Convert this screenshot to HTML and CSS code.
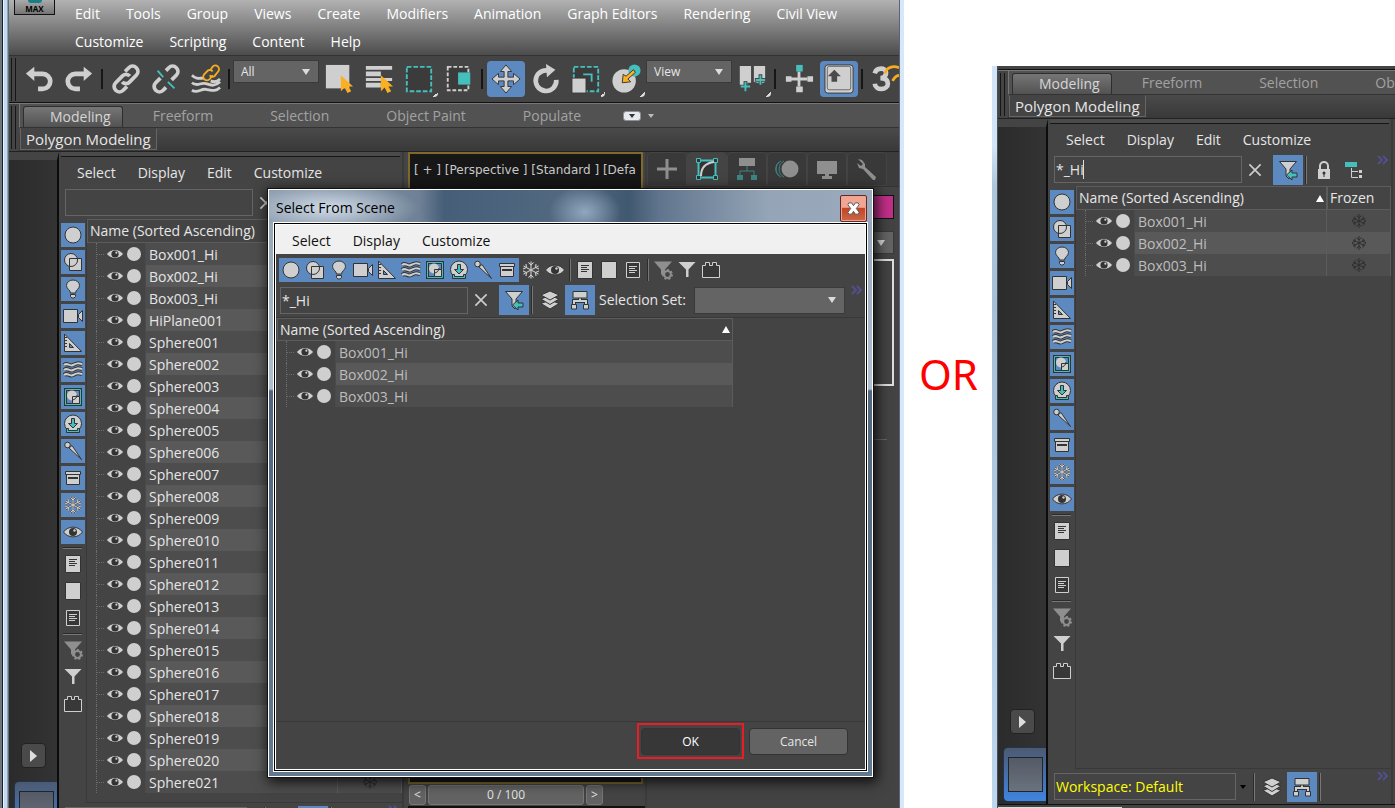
FILE: index.html
```html
<!DOCTYPE html>
<html lang="en">

<head>
    <meta charset="UTF-8">
    <meta name="viewport" content="width=device-width, initial-scale=1.0">
    <title>Select From Scene</title>
    <link rel="stylesheet" href="styles.css">
</head>

<body>
    <svg class="sprite" aria-hidden="true">
        <symbol id="geometry" viewBox="0 0 20 20"><circle cx="10" cy="10" r="8" class="fs" /></symbol>
        <symbol id="shapes" viewBox="0 0 20 20"><circle cx="8" cy="8" r="6.5" class="fs" /><path d="M6.500 6.500h12v12h-12z" class="fs" /><path d="M14.500 7A6.500 6.500 0 0 1 7 14.400" class="ln" /></symbol>
        <symbol id="light" viewBox="0 0 20 20"><path d="M7.500 14C7.500 11 3.500 10 3.500 6.500a6.500 5.500 0 0 1 13 0C16.500 10 12.500 11 12.500 14z" class="fs" /><path d="M7.500 15.500h5v2l-1.500 1.500H9l-1.500-1.500z" class="fs" /></symbol>
        <symbol id="camera" viewBox="0 0 20 20"><path d="M.5 3.500h14v13H.5z" class="fs" /><path d="M15.500 8.500l4-4v11l-4-4z" class="fs" /></symbol>
        <symbol id="helper" viewBox="0 0 20 20"><path d="M1.500 1L18.500 18.500h-17z" class="fs" /><path d="M6.500 10.500v4h4z" class="blue" /><path d="M2 4.500h2M2 7.500h2M2 10.500h2M2 13.500h2" class="ln" /></symbol>
        <symbol id="warp" viewBox="0 0 20 20"><g class="wave-bg"><path d="M1 5c4-3 5 2 9 0s5-2 9-1M1 10c4-3 5 2 9 0s5-2 9-1M1 15c4-3 5 2 9 0s5-2 9-1" /></g><g class="wave"><path d="M1 5c4-3 5 2 9 0s5-2 9-1M1 10c4-3 5 2 9 0s5-2 9-1M1 15c4-3 5 2 9 0s5-2 9-1" /></g></symbol>
        <symbol id="group" viewBox="0 0 20 20"><path d="M1 1h18v18H1z" class="dark" /><path d="M2.500 2.500h15v15h-15z" class="tealbox" /><path d="M3.500 3.500h13v13h-13z" class="blue" /><circle cx="9" cy="8.500" r="5" class="lt" /><path d="M9.500 9.500h7v7h-7z" class="fs" /><path d="M14 8a5 5 0 0 1-5 5" class="ln" /></symbol>
        <symbol id="xref" viewBox="0 0 20 20"><circle cx="10" cy="9.500" r="8.500" class="fs" /><path d="M8.500 4.500h3v5h3L10 14 5.500 9.500h3z" class="teal" /><path d="M3.500 14.500v4h13v-4h-2v2h-9v-2z" class="teal" /></symbol>
        <symbol id="bone" viewBox="0 0 20 20"><path d="M6 7l3-2.500L18.500 18.500z" class="fs" /><circle cx="4.500" cy="4" r="2.800" class="fs" /></symbol>
        <symbol id="container" viewBox="0 0 20 20"><path d="M3.500 6.500h13v10h-13z" class="fs" /><path d="M2.500 3.500h15v3h-15z" class="fs" /><path d="M5 10h10" class="ln thick" /></symbol>
        <symbol id="frozen" viewBox="0 0 20 20"><g class="flake-bg"><path d="M10 1.500v17M2.500 6l15 8M17.500 6l-15 8M7.500 2.500L10 5l2.500-2.500M7.500 17.500L10 15l2.500 2.500M2 9l3.500-1.500L5 4M18 9l-3.500-1.500L15 4M2 11l3.500 1.500L5 16M18 11l-3.500 1.500L15 16" /></g><g class="flake"><path d="M10 1.500v17M2.500 6l15 8M17.500 6l-15 8M7.500 2.500L10 5l2.500-2.500M7.500 17.500L10 15l2.500 2.500M2 9l3.500-1.500L5 4M18 9l-3.500-1.500L15 4M2 11l3.500 1.500L5 16M18 11l-3.500 1.500L15 16" /></g></symbol>
        <symbol id="flake" viewBox="0 0 20 20"><path d="M10 3v14M4 7l12 6M16 7L4 13M7.500 4.500L10 7l2.500-2.500M7.500 15.500L10 13l2.500 2.500M3 9.500l3-1v-3M17 9.500l-3-1v-3M3 10.500l3 1v3M17 10.500l-3 1v3" class="flake-dark" /></symbol>
        <symbol id="eye" viewBox="0 0 20 20"><path d="M.5 10C5 3.500 15 3.500 19.500 10 15 16.500 5 16.500.5 10z" class="fs" /><circle cx="10" cy="10" r="4" class="dark" /><circle cx="11.500" cy="8.500" r="1.200" class="lt" /></symbol>
        <symbol id="all" viewBox="0 0 20 20"><path d="M2.500 1.500h15v17h-15z" class="fs" /><path d="M6 5.500h8M6 7.500h6M6 9.500h8M6 11.500h6" class="ln" /></symbol>
        <symbol id="none" viewBox="0 0 20 20"><path d="M2.500 1.500h15v17h-15z" class="fs" /></symbol>
        <symbol id="invert" viewBox="0 0 20 20"><path d="M3.500 2.500h13v15h-13z" class="inv" /><path d="M6 6.500h8M6 8.500h6M6 10.500h8M6 12.500h6" class="lt-line" /></symbol>
        <symbol id="filterset" viewBox="0 0 20 20"><path d="M1 1.500h18l-7 8V17l-4-3V9.500z" class="dim" /><circle cx="14.500" cy="14.500" r="3.400" class="gear" /><circle cx="14.500" cy="14.500" r="4.500" class="teeth" /></symbol>
        <symbol id="funnel" viewBox="0 0 20 20"><path d="M1.500 2h17l-7 7.500V17H9V9.500z" class="lt" /></symbol>
        <symbol id="brick" viewBox="0 0 20 20"><path d="M1.500 5.500h3v-3h4v3h3v-3h4v3h3v12h-17z" class="inv" /></symbol>
        <symbol id="filterback" viewBox="0 0 20 20"><path d="M1.500 1.500h17l-6.500 7.500v4l-1 6-3-3V9z" class="fs" /><path d="M19 13h-5v-3l-5.500 5 5.500 5v-3h5z" class="teal" /></symbol>
        <symbol id="layers" viewBox="0 0 20 20"><path d="M10 10l9 3.500L10 19l-9-5.500z" class="fs" /><path d="M10 5.500l9 3.500-9 5.500L1 9z" class="fs" /><path d="M10 1l9 4-9 5-9-5z" class="fs" /></symbol>
        <symbol id="hierarchy" viewBox="0 0 20 20"><path d="M10 7v4M4 15v-4h12v4" class="hier-bg" /><path d="M10 7v4M4 15v-4h12v4" class="hier" /><path d="M3 1.500h14V8H3zM1.500 14.500h5v4.500h-5zM13.500 14.500h5v4.500h-5z" class="fs" /></symbol>
        <symbol id="lock" viewBox="0 0 20 20"><path d="M6 10V6a4 4 0 0 1 8 0v4" class="lt-line thick" /><path d="M4 9h12v10H4z" class="lt" /><circle cx="10" cy="13" r="1.500" class="dark" /><path d="M9.500 13h1v4h-1z" class="dark" /></symbol>
        <symbol id="tree" viewBox="0 0 20 20"><path d="M1 2h12v5H1z" class="teal-flat" /><path d="M7.500 8v9.500H14M7.500 11.500H14" class="lt-line" /><path d="M15 10h3v3h-3zM15 15h3v3h-3z" class="lt" /></symbol>
        <symbol id="clear" viewBox="0 0 20 20"><path d="M3 3l14 14M17 3L3 17" class="lt-line thick" /></symbol>
        <symbol id="more" viewBox="0 0 12 10"><path d="M1 1l4 4-4 4M6 1l4 4-4 4" class="chevron" /></symbol>

        <symbol id="undo" viewBox="0 0 32 32"><path d="M2 10l9-7v5h9a9 9 0 0 1 0 21h-5v-5h5a5 5 0 0 0 0-11h-9v5z" class="lt" /></symbol>
        <symbol id="redo" viewBox="0 0 32 32"><path d="M30 10l-9-7v5h-9a9 9 0 0 0 0 21h5v-5h-5a5 5 0 0 1 0-11h9v5z" class="lt" /></symbol>
        <symbol id="link" viewBox="0 0 32 32"><g class="chain"><path d="M15 8l4-4a5 5 0 0 1 8 8l-7 7a5 5 0 0 1-8 0" /><path d="M17 24l-4 4a5 5 0 0 1-8-8l7-7a5 5 0 0 1 8 0" /></g></symbol>
        <symbol id="unlink" viewBox="0 0 32 32"><g class="chain"><path d="M16 7l3-3a5 5 0 0 1 8 8l-5 5" /><path d="M16 25l-3 3a5 5 0 0 1-8-8l5-5" /></g><path d="M7 7l6 7M18 19l7 7" class="teal-line" /></symbol>
        <symbol id="bind" viewBox="0 0 32 32"><path d="M1 12c5 5 8 3 13 3M21 18c4 2 7 1 10-2M1 20c6 5 9-1 15 1s10 3 15-2M1 28c6 4 9-2 15-1s10 3 15-2" class="bigwave" /><g class="gold-chain"><path d="M21 6l2-3a3.500 3.500 0 0 1 6 5l-4 5a3.500 3.500 0 0 1-5-1" /><path d="M23 12l-3 4a3.500 3.500 0 0 1-6-5l4-4a3.500 3.500 0 0 1 5 1" /></g></symbol>
        <symbol id="selobj" viewBox="0 0 32 32"><path d="M2 1h25v25H2z" class="lt" /><path d="M18 12v17l4-4 3 6 4-2-3-5h5z" class="gold" /></symbol>
        <symbol id="byname" viewBox="0 0 32 32"><path d="M2 2h28v4H2zM2 8h16v5H2zM2 15h28v3H2zM2 20h16v5H2z" class="lt" /><path d="M18 12v17l4-4 3 6 4-2-3-5h5z" class="gold" /></symbol>
        <symbol id="region" viewBox="0 0 32 32"><path d="M3 3h26v26H3z" class="teal-dash" /></symbol>
        <symbol id="crossing" viewBox="0 0 32 32"><path d="M4 3h22v25H4z" class="lt-dash" /><path d="M15 9h13v13H15z" class="teal-flat" /></symbol>
        <symbol id="move" viewBox="0 0 32 32"><path d="M16 1l6 7h-4v6h6v-4l7 6-7 6v-4h-6v6h4l-6 7-6-7h4v-6H8v4l-7-6 7-6v4h6V8h-4z" class="fs" /></symbol>
        <symbol id="rotate" viewBox="0 0 32 32"><path d="M21 8A11 11 0 1 0 27 17" class="rot" /><path d="M16 0l10 6-9 8z" class="lt" /></symbol>
        <symbol id="scale" viewBox="0 0 32 32"><path d="M3 3h26v26H3z" class="teal-dash" /><path d="M1 15h15v16H1z" class="fs" /><path d="M13 11h9v8" class="teal-line thick" /></symbol>
        <symbol id="place" viewBox="0 0 32 32"><circle cx="14" cy="18" r="12.500" class="lt" /><circle cx="25" cy="7" r="6.500" class="teal-flat" /><path d="M24 6l2 3-8 7 3 3-9 1 1-9 3 2z" class="gold outline" /></symbol>
        <symbol id="pivot" viewBox="0 0 32 32"><path d="M3 2h12v18H11v6L3 22zM18 2h12v17l-4 2-8-2z" class="lt" /><path d="M9 18v12M3 24h12M25 11v12M19 17h12" class="dark-line" /><path d="M9 19v10M4 24h10M25 12v10M20 17h10" class="teal-line" /></symbol>
        <symbol id="manip" viewBox="0 0 32 32"><path d="M16 8v16M7 16h18" class="bar" /><path d="M13 1h7v7h-7z" class="teal-flat" /><path d="M13 24h7v6h-7zM2 13h6v6H2zM25 13h6v6h-6z" class="lt" /></symbol>
        <symbol id="keyboard" viewBox="0 0 32 32"><rect x="1" y="1" width="30" height="30" rx="3" class="fs" /><rect x="3.500" y="2.500" width="25" height="25" rx="2" class="keytop" /><path d="M11 6l7 7h-4v6H8v-6H4z" class="darker" /></symbol>
        <symbol id="magnet" viewBox="0 0 32 32"><path d="M4 10c2-7 12-6 12-1 0 5-4 6-6 6 4 0 8 1 8 6 0 7-13 8-14 0" class="rot" /><path d="M15 10c2-8 10-8 15-6M23 18c2-4 4-6 8-6" class="gold-line" /></symbol>

        <symbol id="create" viewBox="0 0 24 24"><path d="M10.500 2h3v8.500H22v3h-8.500V22h-3v-8.500H2v-3h8.500z" class="grey" /></symbol>
        <symbol id="modify" viewBox="0 0 24 24"><path d="M3.500 3.500h17v17h-17z" class="teal-frame" /><path d="M1.500 1.500h4v4h-4zM18.500 1.500h4v4h-4zM1.500 18.500h4v4h-4zM18.500 18.500h4v4h-4z" class="handle" /><path d="M6 19c0-9 5-13 13-14" class="lt-line thick" /></symbol>
        <symbol id="hier" viewBox="0 0 24 24"><path d="M4 1h16v8H4z" class="grey" /><path d="M12 9v5M5 18v-4h14v4" class="teal-thin" /><path d="M2 18h6v5H2zM16 18h6v5h-6z" class="teal-dim" /></symbol>
        <symbol id="motion" viewBox="0 0 24 24"><circle cx="15" cy="12" r="8.500" class="grey" /><path d="M9 4a9 9 0 0 0 0 16M6 4a9 9 0 0 0 0 16M4 5a9 9 0 0 0 0 14" class="teal-thin" /></symbol>
        <symbol id="display" viewBox="0 0 24 24"><path d="M2 4h20v13H2zM10 17h4v2h3v3H7v-3h3z" class="grey" /></symbol>
        <symbol id="utility" viewBox="0 0 24 24"><path d="M3 2l4 1 3 4v3l11 10-1 3h-2L8 12l-4-1-2-5 4 3 2-2z" class="grey" /></symbol>
    </svg>

    <main class="desktop">
        <section class="app app-full">
            <div class="frame frame-left"></div>
            <div class="app-body">
                <header class="menubar">
                    <div class="app-logo"><span class="logo-dot"></span>MAX</div>
                    <nav class="menus">
                        <a href="#">Edit</a><a href="#">Tools</a><a href="#">Group</a><a href="#">Views</a>
                        <a href="#">Create</a><a href="#">Modifiers</a><a href="#">Animation</a>
                        <a href="#">Graph Editors</a><a href="#">Rendering</a><a href="#">Civil View</a>
                        <a href="#">Customize</a><a href="#">Scripting</a><a href="#">Content</a><a href="#">Help</a>
                    </nav>
                </header>

                <div class="toolbar">
                    <i class="grip"></i>
                    <button aria-label="Undo"><svg><use href="#undo" /></svg></button>
                    <button aria-label="Redo"><svg><use href="#redo" /></svg></button>
                    <i class="sep"></i>
                    <button aria-label="Link"><svg><use href="#link" /></svg></button>
                    <button aria-label="Unlink"><svg><use href="#unlink" /></svg></button>
                    <button aria-label="Bind to Space Warp"><svg><use href="#bind" /></svg></button>
                    <i class="sep"></i>
                    <select aria-label="Selection Filter"><option>All</option></select>
                    <button aria-label="Select Object"><svg><use href="#selobj" /></svg></button>
                    <button aria-label="Select by Name"><svg><use href="#byname" /></svg></button>
                    <button class="fly" aria-label="Selection Region"><svg><use href="#region" /></svg></button>
                    <button aria-label="Window / Crossing"><svg><use href="#crossing" /></svg></button>
                    <i class="sep"></i>
                    <button class="on" aria-label="Move"><svg><use href="#move" /></svg></button>
                    <button aria-label="Rotate"><svg><use href="#rotate" /></svg></button>
                    <button class="fly" aria-label="Scale"><svg><use href="#scale" /></svg></button>
                    <button class="fly" aria-label="Place"><svg><use href="#place" /></svg></button>
                    <select aria-label="Coordinate System"><option>View</option></select>
                    <button class="fly" aria-label="Pivot Center"><svg><use href="#pivot" /></svg></button>
                    <i class="sep"></i>
                    <button aria-label="Manipulate"><svg><use href="#manip" /></svg></button>
                    <button class="on" aria-label="Keyboard Override"><svg><use href="#keyboard" /></svg></button>
                    <i class="sep"></i>
                    <button aria-label="Snaps Toggle"><svg><use href="#magnet" /></svg></button>
                </div>

                <div class="ribbon">
                    <i class="grip"></i>
                    <div class="ribbon-main">
                        <nav class="tabs">
                            <a class="active" href="#">Modeling</a><a href="#">Freeform</a><a href="#">Selection</a>
                            <a href="#">Object Paint</a><a href="#">Populate</a>
                            <button class="pill" aria-label="Minimize ribbon"></button><i class="caret"></i>
                        </nav>
                        <div class="ribbon-panel"><a href="#">Polygon Modeling</a></div>
                    </div>
                </div>

                <div class="work">
                    <div class="side">
                        <button class="play" aria-label="Expand"></button>
                        <div class="layout-tab"><span></span></div>
                    </div>
                    <div class="explorer" id="explorer-main"></div>
                    <div class="center">
                        <div class="viewport">[ + ] [Perspective ] [Standard ] [Defa</div>
                        <div class="time">
                            <button>&lt;</button><button class="slider">0 / 100</button><button>&gt;</button>
                        </div>
                        <div class="ticks"></div>
                    </div>
                    <div class="command">
                        <div class="cmd-tabs">
                            <button aria-label="Create"><svg><use href="#create" /></svg></button>
                            <button class="on" aria-label="Modify"><svg><use href="#modify" /></svg></button>
                            <button aria-label="Hierarchy"><svg><use href="#hier" /></svg></button>
                            <button aria-label="Motion"><svg><use href="#motion" /></svg></button>
                            <button aria-label="Display"><svg><use href="#display" /></svg></button>
                            <button aria-label="Utilities"><svg><use href="#utility" /></svg></button>
                        </div>
                        <div class="cmd-body">
                            <div class="swatch"></div>
                            <select aria-label="Modifier List"><option></option></select>
                            <div class="stack"></div>
                            <hr>
                        </div>
                    </div>
                </div>
            </div>
            <div class="frame frame-right"></div>

            <div class="dialog" role="dialog" aria-labelledby="dialog-title">
                <div class="titlebar">
                    <h1 id="dialog-title">Select From Scene</h1>
                    <button class="close" aria-label="Close"><svg viewBox="0 0 16 16"><path d="M3 2h3l2 3 2-3h3l1 2-3 4 3 4-1 2h-3l-2-3-2 3H3l-1-2 3-4-3-4z" /></svg></button>
                </div>
                <div class="dialog-body">
                    <nav class="dialog-menu"><a href="#">Select</a><a href="#">Display</a><a href="#">Customize</a></nav>
                    <div class="filters-h" id="dialog-filters"></div>
                    <div class="find">
                        <input type="text" aria-label="Find" value="*_Hi">
                        <button class="clear" aria-label="Clear"><svg><use href="#clear" /></svg></button>
                        <button class="sq on" aria-label="Filter by find"><svg><use href="#filterback" /></svg></button>
                        <i class="vsep"></i>
                        <button class="sq" aria-label="Sort by Layer"><svg><use href="#layers" /></svg></button>
                        <button class="sq on" aria-label="Sort by Hierarchy"><svg><use href="#hierarchy" /></svg></button>
                        <label for="selset">Selection Set:</label>
                        <select id="selset"><option></option></select>
                        <svg class="more"><use href="#more" /></svg>
                    </div>
                    <div class="results" id="dialog-list"></div>
                    <div class="actions">
                        <div class="marked"><button class="ok">OK</button></div>
                        <button class="cancel">Cancel</button>
                    </div>
                </div>
            </div>
        </section>

        <div class="or"><p>OR</p></div>

        <section class="app app-docked">
            <div class="frame frame-left"></div>
            <div class="app-body">
                <div class="ribbon">
                    <i class="grip"></i>
                    <div class="ribbon-main">
                        <nav class="tabs">
                            <a class="active" href="#">Modeling</a><a href="#">Freeform</a><a href="#">Selection</a>
                            <a href="#">Ob</a>
                        </nav>
                        <div class="ribbon-panel"><a href="#">Polygon Modeling</a></div>
                    </div>
                </div>
                <div class="work">
                    <div class="side">
                        <button class="play" aria-label="Expand"></button>
                        <div class="layout-tab"><span></span></div>
                    </div>
                    <div class="explorer" id="explorer-docked"></div>
                </div>
                <div class="trackbar"><span></span></div>
            </div>
        </section>
    </main>

    <script>
        const filters = ["geometry", "shapes", "light", "camera", "helper", "warp", "group", "xref", "bone", "container", "frozen", "eye"];
        const tools = ["all", "none", "invert", "", "filterset", "funnel", "brick"];
        const boxes = ["Box001_Hi", "Box002_Hi", "Box003_Hi"];
        const scene = boxes.concat("HiPlane001");
        for (let i = 1; i <= 21; i++)
            scene.push("Sphere0" + (i < 10 ? "0" + i : i));

        function icon(name) {
            return `<svg><use href="#${name}" /></svg>`;
        }

        // buttons of the filter bar, the first `on` of them are pressed
        function filterBar(on) {
            let html = "";
            filters.forEach((f, i) => {
                html += `<button class="${i < on ? "on" : ""}" aria-label="${f}">${icon(f)}</button>`;
            });
            html += "<i></i>";
            tools.forEach(t => {
                html += t ? `<button aria-label="${t}">${icon(t)}</button>` : "<i></i>";
            });
            return html;
        }

        function nodeTable(names, frozen) {
            let html = `<table><colgroup><col class="col-tree"><col>${frozen ? `<col class="col-frozen">` : ""}</colgroup>`;
            html += `<thead><tr><th class="name" colspan="2">Name (Sorted Ascending)</th>`;
            html += frozen ? `<th class="frozen">Frozen</th>` : "";
            html += "</tr></thead><tbody>";
            names.forEach(n => {
                html += `<tr><td class="tree"><div><i></i>${icon("eye")}<b></b></div></td><td class="node">${n}</td>`;
                html += frozen ? `<td class="frozen">${icon("flake")}</td>` : "";
                html += "</tr>";
            });
            return html + "</tbody></table>";
        }

        function explorer(id, names, find) {
            document.getElementById(id).innerHTML = `
                <div class="handle-bar"></div>
                <nav class="exp-menu"><a href="#">Select</a><a href="#">Display</a><a href="#">Edit</a><a href="#">Customize</a></nav>
                <div class="find">
                    <input type="text" aria-label="Find" value="${find}">
                    <button class="clear" aria-label="Clear">${icon("clear")}</button>
                    <button class="sq on" aria-label="Filter by find">${icon("filterback")}</button>
                    <i class="vsep"></i>
                    <button class="sq" aria-label="Lock">${icon("lock")}</button>
                    <button class="sq" aria-label="Hierarchy">${icon("tree")}</button>
                    <svg class="more"><use href="#more" /></svg>
                </div>
                <div class="exp-body">
                    <div class="filters-v">${filterBar(12)}</div>
                    <div class="list">${nodeTable(names, true)}</div>
                </div>
                <div class="workspace">
                    <input type="text" aria-label="Workspace" value="Workspace: Default">
                    <i class="caret"></i><i class="vsep"></i>
                    <button class="sq" aria-label="Sort by Layer">${icon("layers")}</button>
                    <button class="sq on" aria-label="Sort by Hierarchy">${icon("hierarchy")}</button>
                    <i class="vsep"></i>
                    <svg class="more"><use href="#more" /></svg>
                </div>`;
        }

        explorer("explorer-main", scene, "");
        explorer("explorer-docked", boxes, "*_Hi");
        document.getElementById("dialog-filters").innerHTML = filterBar(10);
        document.getElementById("dialog-list").innerHTML = nodeTable(boxes, false);
    </script>
</body>

</html>
```
FILE: styles.css
```css
* {
    box-sizing: border-box;
}

body {
    margin: 0;
    font-family: "Open Sans", "Noto Sans", sans-serif;
    font-size: 14px;
    line-height: 20px;
    color: #e6e6e6;
    background: #fff;
    overflow: hidden;
}

a {
    color: inherit;
    text-decoration: none;
}

button,
input,
select {
    font: inherit;
    color: inherit;
    margin: 0;
    padding: 0;
    border: none;
    background: none;
    border-radius: 0;
}

svg {
    display: block;
    flex: none;
}

.sprite {
    position: absolute;
    width: 0;
    height: 0;
}

/* icon parts */
.fs { fill: #cfcfcf; stroke: #333; }
.lt { fill: #cfcfcf; }
.dark { fill: #333; }
.darker { fill: #4a4a4a; }
.blue { fill: #5d89c1; stroke: #333; }
.ln { fill: none; stroke: #333; }
.lt-line { fill: none; stroke: #cfcfcf; }
.inv { fill: #383838; stroke: #cfcfcf; }
.thick { stroke-width: 2; }
.wave, .wave-bg, .flake, .flake-bg { fill: none; stroke: #cfcfcf; stroke-width: 2; }
.wave-bg { stroke: #333; stroke-width: 4; }
.flake { stroke-width: 1; }
.flake-bg { stroke: #555; stroke-width: 2; }
.flake-dark { fill: none; stroke: #2f2f2f; }
.teal { fill: #45bfbc; stroke: #333; }
.teal-flat { fill: #45bfbc; }
.teal-dim { fill: #3d8583; }
.tealbox { fill: none; stroke: #45bfbc; }
.teal-line { fill: none; stroke: #45bfbc; stroke-width: 2; }
.teal-thin { fill: none; stroke: #3d8583; }
.teal-frame { fill: #333; stroke: #45bfbc; stroke-width: 2; }
.handle { fill: #333; stroke: #45bfbc; }
.teal-dash { fill: #3b3b3b; stroke: #45bfbc; stroke-width: 2; stroke-dasharray: 5 2; }
.lt-dash { fill: #3b3b3b; stroke: #cfcfcf; stroke-width: 2; stroke-dasharray: 4 2; }
.dim { fill: #8f8f8f; }
.gear { fill: #444; stroke: #8f8f8f; stroke-width: 2; }
.teeth { fill: none; stroke: #8f8f8f; stroke-width: 2; stroke-dasharray: 2 2; }
.grey { fill: #8f8f8f; }
.chain { fill: none; stroke: #cfcfcf; stroke-width: 4; }
.gold-chain { fill: none; stroke: #f5ad1e; stroke-width: 2; }
.gold { fill: #fbb021; }
.outline { stroke: #333; }
.gold-line { fill: none; stroke: #f5ad1e; stroke-width: 3; }
.bigwave { fill: none; stroke: #cfcfcf; stroke-width: 3; }
.dark-line { fill: none; stroke: #444; stroke-width: 4; }
.bar { stroke: #cfcfcf; stroke-width: 3; }
.rot { fill: none; stroke: #cfcfcf; stroke-width: 5; }
.hier-bg { fill: none; stroke: #333; stroke-width: 4; }
.hier { fill: none; stroke: #cfcfcf; stroke-width: 2; }
.keytop { fill: none; stroke: #666; }
.chevron { fill: none; stroke: #50508c; stroke-width: 2; }

.desktop {
    display: grid;
    grid-template-columns: 905fr 87fr 403fr;
    height: 100vh;
}

.app {
    position: relative;
    display: flex;
    min-width: 0;
    overflow: hidden;
}

.app-docked {
    margin-top: 66px;
}

.app-body {
    flex: 1;
    min-width: 0;
    display: flex;
    flex-direction: column;
    background: #444;
    overflow: hidden;
}

.app-docked .app-body {
    padding-top: 4px;
}

.frame {
    flex: none;
    width: 9px;
    background: linear-gradient(90deg, #6f7680 2px, #15202c 2px 3px, #eaf3fc 3px 4px, #c4daf0 4px 7px, #5c6b7c 8px);
}

.frame-right {
    width: 6px;
    background: linear-gradient(90deg, #5c6470 1px, #d5e7f9 1px 5px, #fff 5px);
}

.app-docked .frame {
    width: 6px;
    background: linear-gradient(#d2e5f8, #d2e5f8 80px, #aec6dc 120px, #a6bfd6 240px, #bed7ee);
    border-right: 1px solid #46505c;
}

/* menu bar */
.menubar {
    flex: none;
    display: flex;
    height: 55px;
    background: linear-gradient(#b2b2b2, #4c4c4c);
    color: #fff;
}

.app-logo {
    display: flex;
    flex-direction: column;
    align-items: center;
    justify-content: flex-end;
    width: 41px;
    height: 15px;
    margin-left: 5px;
    border: 1px solid #111;
    border-top: 0;
    background: linear-gradient(#aaa, #747474);
    color: #000;
    font-size: 8px;
    line-height: 11px;
    font-weight: bold;
}

.logo-dot {
    width: 14px;
    height: 3px;
    border-radius: 0 0 8px 8px;
    background: #167f88;
}

.menus {
    flex: 1;
    display: flex;
    flex-wrap: wrap;
    column-gap: 26px;
    margin-left: 20px;
    line-height: 28px;
}

/* main toolbar */
.toolbar {
    flex: none;
    display: flex;
    height: 48px;
    border-top: 1px solid #333;
    overflow: hidden;
}

.grip {
    flex: none;
    width: 5px;
    margin: 2px 3px 2px 2px;
    border: solid #161616;
    border-width: 0 1px;
}

.toolbar button {
    flex: none;
    display: flex;
    align-items: center;
    justify-content: center;
    width: 38px;
    height: 36px;
    margin: 5px 1px;
    border-radius: 4px;
}

.toolbar button svg {
    width: 30px;
    height: 30px;
}

.toolbar .on,
.filters-h .on,
.filters-v .on,
.sq.on {
    background: #5d89c1;
}

.toolbar .fly {
    background: linear-gradient(135deg, transparent 50%, #ddd 50%) right bottom / 5px 5px no-repeat;
}

.sep {
    flex: none;
    width: 2px;
    height: 20px;
    margin: 13px 3px 0 2px;
    background: #161616;
}

.toolbar select,
.find select,
.command select {
    appearance: none;
    background: #646464 url('data:image/svg+xml,<svg xmlns="http://www.w3.org/2000/svg" width="8" height="6"><path d="M0 0h8L4 6z" fill="%23dcdcdc"/></svg>') right 8px center no-repeat;
    border: 1px solid #3a3a3a;
}

.toolbar select {
    flex: none;
    width: 86px;
    height: 23px;
    margin-top: 4px;
    padding-left: 7px;
    font-size: 12px;
}

/* ribbon */
.ribbon {
    flex: none;
    display: flex;
    height: 49px;
    border-top: 1px solid #777;
    border-bottom: 1px solid #222;
    box-shadow: 0 -1px #111;
}

.ribbon-main {
    flex: 1;
    min-width: 0;
    overflow: hidden;
}

.tabs {
    display: flex;
    align-items: center;
    gap: 57px;
    height: 24px;
    padding-left: 3px;
    background: #525252;
    border-left: 1px solid #777;
    border-bottom: 1px solid #333;
    color: #a2a2a2;
    white-space: nowrap;
}

.tabs .active {
    flex: none;
    height: 21px;
    align-self: flex-end;
    margin-right: -27px;
    padding: 0 11px 0 26px;
    border: 1px solid #2e2e2e;
    border-bottom: 0;
    border-radius: 3px 3px 0 0;
    background: linear-gradient(#767676, #525252);
    color: #d6d6d6;
}

.pill {
    width: 18px;
    height: 10px;
    margin: 0 -50px 0 -15px;
    border: 1px solid #8b9097;
    border-radius: 3px;
    background: url('data:image/svg+xml,<svg xmlns="http://www.w3.org/2000/svg" width="6" height="4"><path d="M0 0h6L3 4z" fill="%23333"/></svg>') center no-repeat #e6eaee;
}

.caret {
    flex: none;
    border: 3px solid transparent;
    border-top: 4px solid #bbb;
    border-bottom: 0;
}

.ribbon-panel {
    height: 24px;
    background: linear-gradient(#4a4a4a, #383838);
}

.ribbon-panel a {
    display: inline-block;
    height: 22px;
    margin-left: 1px;
    padding: 0 5px;
    border: 1px solid #656565;
    border-top-color: #444;
    background: #444;
    font-size: 15px;
}

/* work area */
.work {
    flex: 1 0 auto;
    display: flex;
}

.side {
    flex: none;
    display: flex;
    flex-direction: column;
    justify-content: flex-end;
    gap: 13px;
    width: 50px;
    padding: 0 0 2px 5px;
    border-right: 2px solid #0c0c0c;
    background: linear-gradient(90deg, #2b2b2b, #333);
    border-top: 8px solid #444;
}

.play {
    width: 25px;
    height: 25px;
    margin-left: 7px;
    border: 1px solid #222;
    border-radius: 4px;
    background: url('data:image/svg+xml,<svg xmlns="http://www.w3.org/2000/svg" width="7" height="12"><path d="M0 0v12l7-6z" fill="%23ddd"/></svg>') center no-repeat #4a4a4a;
}

.layout-tab {
    height: 55px;
    padding: 9px 3px 10px 4px;
    border: 1px solid #25344a;
    border-right: 0;
    border-radius: 5px 0 0 5px;
    background: linear-gradient(#4c5a72, #3f84e0);
}

.layout-tab span {
    display: block;
    height: 35px;
    border: 1px solid #20252c;
    background: linear-gradient(#545a66, #69727e);
}

.explorer {
    flex: none;
    display: flex;
    flex-direction: column;
    width: 345px;
    border-right: 2px solid #3a3a3a;
}

.handle-bar {
    flex: none;
    height: 8px;
    border-top: 4px solid #4b4b4b;
    box-shadow: inset 0 1px #161616;
    margin: 0 2px;
}

.exp-menu {
    flex: none;
    display: flex;
    gap: 22px;
    height: 26px;
    padding-left: 18px;
    line-height: 26px;
}

.find,
.workspace {
    flex: none;
    display: flex;
    align-items: center;
    height: 33px;
    padding-left: 6px;
}

.find input,
.workspace input {
    flex: none;
    width: 188px;
    height: 27px;
    padding: 0 1px;
    border: 1px solid #656565;
}

/* caret of the focused find box */
#explorer-docked .find input {
    background: linear-gradient(#ddd, #ddd) 28px 3px / 1px 19px no-repeat;
}

.clear,
.sq {
    flex: none;
    display: flex;
    align-items: center;
    justify-content: center;
    width: 30px;
    height: 30px;
}

.clear {
    width: 26px;
    margin-right: 5px;
}

.clear svg {
    width: 16px;
    height: 16px;
}

.sq svg {
    width: 20px;
    height: 20px;
}

.vsep {
    flex: none;
    width: 2px;
    height: 28px;
    margin: 0 2px;
    background: linear-gradient(90deg, #2c2c2c 50%, #777 50%);
}

.more {
    align-self: flex-start;
    width: 12px;
    height: 10px;
    margin: 2px 2px 0 auto;
}

.exp-body {
    flex: 1 0 auto;
    display: flex;
}

.filters-v {
    flex: none;
    width: 27px;
    padding: 4px 0 0 2px;
}

.filters-v button,
.filters-h button {
    display: flex;
    align-items: center;
    justify-content: center;
    width: 24px;
    height: 24px;
}

.filters-v button {
    margin-bottom: 3px;
}

.filters-v svg,
.filters-h svg {
    width: 20px;
    height: 20px;
}

.filters-v i {
    display: block;
    width: 19px;
    height: 2px;
    margin: 2px 2px 3px;
    border-top: 1px solid #2c2c2c;
    border-bottom: 1px solid #777;
}

.list {
    flex: 1;
    padding-bottom: 9px;
    border: solid #393939;
    border-width: 0 0 1px 1px;
}

table {
    width: 100%;
    border-collapse: separate;
    border-spacing: 0;
    table-layout: fixed;
}

.col-tree {
    width: 58px;
}

.col-frozen {
    width: 64px;
}

th {
    height: 24px;
    padding: 0 2px;
    border: 1px solid #5c5c5c;
    font-weight: normal;
    text-align: left;
    white-space: nowrap;
}

th.name {
    background: url('data:image/svg+xml,<svg xmlns="http://www.w3.org/2000/svg" width="8" height="7"><path d="M4 0l4 7H0z" fill="%23fff"/></svg>') right 2px center no-repeat;
}

td {
    height: 22px;
    padding: 0;
    line-height: 20px;
}

.tree div {
    display: flex;
    align-items: center;
    height: 22px;
}

.tree i {
    flex: none;
    width: 8px;
    height: 22px;
    margin: 0 2px 0 9px;
    border-left: 1px dotted #6b6b6b;
    background: linear-gradient(90deg, #6b6b6b 50%, transparent 50%) 0 50% / 2px 1px repeat-x;
}

.tree svg {
    width: 18px;
    height: 18px;
}

.tree b {
    width: 14px;
    height: 14px;
    margin-left: 3px;
    border-radius: 7px;
    background: #cfcfcf;
}

td.node {
    padding: 2px 0 0 3px;
    border-left: 1px solid #4a4a4a;
}

td.node,
td.frozen {
    background: #4d4d4d;
    border-right: 1px solid #5c5c5c;
}

tr:nth-child(even) td.node,
tr:nth-child(even) td.frozen {
    background: #595959;
}

td.frozen svg {
    width: 20px;
    height: 20px;
    margin: 0 auto;
}

#explorer-docked td.node,
.dialog td.node {
    color: #bebebe;
}

.workspace {
    height: 35px;
}

.workspace input {
    width: 182px;
    color: #ff0;
}

.workspace .caret {
    margin: 0 5px 0 4px;
    border-top-color: #000;
}

.trackbar {
    flex: none;
    height: 4px;
    border-top: 1px solid #111;
    padding-top: 2px;
}

.trackbar span {
    display: block;
    width: 124px;
    height: 1px;
    background: #ddd;
}

/* viewport and command panel */
.center {
    flex: 1;
    display: flex;
    flex-direction: column;
    min-width: 0;
    height: calc(100vh - 152px);
    margin-left: 4px;
}

.viewport {
    flex: 1;
    margin-right: 2px;
    padding: 6px 0 0 4px;
    border: 2px solid #7f692c;
    background: #171717;
    color: #c8c8c8;
    white-space: nowrap;
    overflow: hidden;
    font-family: "DejaVu Sans", sans-serif;
    font-size: 12px;
}

.time {
    flex: none;
    display: flex;
    gap: 2px;
    padding: 1px;
}

.time button {
    width: 17px;
    height: 20px;
    border: 1px solid #777;
    border-radius: 3px;
    background: #636363;
    font-size: 12px;
    line-height: 18px;
}

.time .slider {
    width: 156px;
}

.ticks {
    flex: none;
    height: 2px;
    background: #111;
}

.command {
    flex: none;
    width: 254px;
    padding-left: 2px;
    background: #3c3c3c;
}

.cmd-tabs {
    display: flex;
}

.cmd-tabs button {
    display: flex;
    align-items: center;
    justify-content: center;
    width: 40px;
    height: 34px;
    border: 1px solid #444;
    border-radius: 5px 5px 0 0;
    background: #393939;
}

.cmd-tabs .on {
    background: #444;
}

.cmd-tabs svg {
    width: 24px;
    height: 24px;
}

.cmd-body {
    padding: 8px 5px;
    border-top: 1px solid #333;
    background: #434343;
    height: 100%;
}

.swatch {
    width: 40px;
    height: 24px;
    margin-left: auto;
    border: 1px solid #111;
    background: #c02f87;
}

.command select {
    display: block;
    width: 100%;
    height: 23px;
    margin-top: 12px;
}

.stack {
    height: 127px;
    margin-top: 5px;
    border: 2px solid #ddd;
}

.command hr {
    margin: 53px 7px 0 0;
    border: 0;
    border-top: 1px solid #666;
}

/* dialog */
.dialog {
    position: absolute;
    top: 189px;
    right: 32px;
    bottom: 31px;
    left: 268px;
    display: flex;
    flex-direction: column;
    padding: 0 6px 6px;
    box-shadow: inset 0 0 0 1px #fff, 0 0 0 1px #111, 2px 3px 12px 2px rgba(0, 0, 0, 0.8);
    background: linear-gradient(#96a5b6 20px, #b0bfce 200px, #52677f 202px, #64788f);
}

.titlebar {
    flex: none;
    display: flex;
    justify-content: space-between;
    height: 32px;
    margin: 1px -5px 1px;
    padding: 0 5px 0 7px;
    background:
        radial-gradient(ellipse 90px 26px at 60px 18px, #d0dbe7, transparent),
        radial-gradient(ellipse 36px 26px at 316px 22px, #91a7bf, transparent),
        linear-gradient(90deg, #8898aa, #6f8196 150px, #465e78 175px, #526981 300px, #405870 360px, #60758d 390px, #95a5b7 500px, #9aaabc);
}

.titlebar h1 {
    margin: 0;
    color: #000;
    font-size: 14px;
    font-weight: normal;
    line-height: 35px;
}

.close {
    width: 27px;
    height: 27px;
    margin-top: 5px;
    padding: 0 5px;
    border: 1px solid #612a24;
    border-radius: 2px;
    box-shadow: inset 0 0 0 1px #eba594;
    background: linear-gradient(#f1a592 45%, #c04626 50%, #cc6748);
}

.close svg {
    width: 15px;
    height: 15px;
    fill: #fff;
    stroke: #555;
}

.dialog-body {
    flex: 1;
    display: flex;
    flex-direction: column;
    border: 1px solid #000;
    outline: 1px solid #fff;
    box-shadow: inset 0 0 0 1px #fff;
    padding: 1px;
    background: #444;
}

.dialog-menu {
    flex: none;
    display: flex;
    gap: 22px;
    height: 29px;
    padding-left: 16px;
    line-height: 31px;
    background: #f0f0f0;
    color: #111;
}

.filters-h {
    flex: none;
    display: flex;
    padding: 4px 0 1px 3px;
}

.filters-h i {
    width: 2px;
    height: 22px;
    margin: 1px 2px;
    background: linear-gradient(90deg, #2c2c2c 50%, #777 50%);
}

.dialog .find {
    height: 35px;
    padding-left: 4px;
    border-bottom: 1px solid #383838;
}

.find label {
    margin: 0 8px 0 4px;
}

.find select {
    flex: none;
    width: 151px;
    height: 27px;
}

.results {
    flex: 1;
}

.results table {
    width: 456px;
    margin-left: 1px;
}

.results th {
    height: 23px;
    line-height: 19px;
}

.actions {
    flex: none;
    display: flex;
    justify-content: flex-end;
    gap: 5px;
    height: 48px;
    padding: 1px 17px 0 0;
    border-top: 1px solid #383838;
    font-size: 12px;
}

.marked {
    width: 107px;
    height: 36px;
    padding: 2px;
    border: 2px solid #ec1c24;
}

.actions button {
    width: 99px;
    height: 27px;
    border: 1px solid #333;
    border-radius: 4px;
    background: #636363;
}

.actions .ok {
    margin: 1px 0;
    background: #373737;
    color: #fff;
}

.actions .cancel {
    margin-top: 5px;
}

/* text between the two windows */
.or {
    display: flex;
    align-items: center;
    justify-content: center;
    padding-bottom: 60px;
}

.or p {
    margin: 0;
    color: #f00;
    font-family: "Noto Sans", sans-serif;
    font-size: 42px;
    line-height: 48px;
}
```
